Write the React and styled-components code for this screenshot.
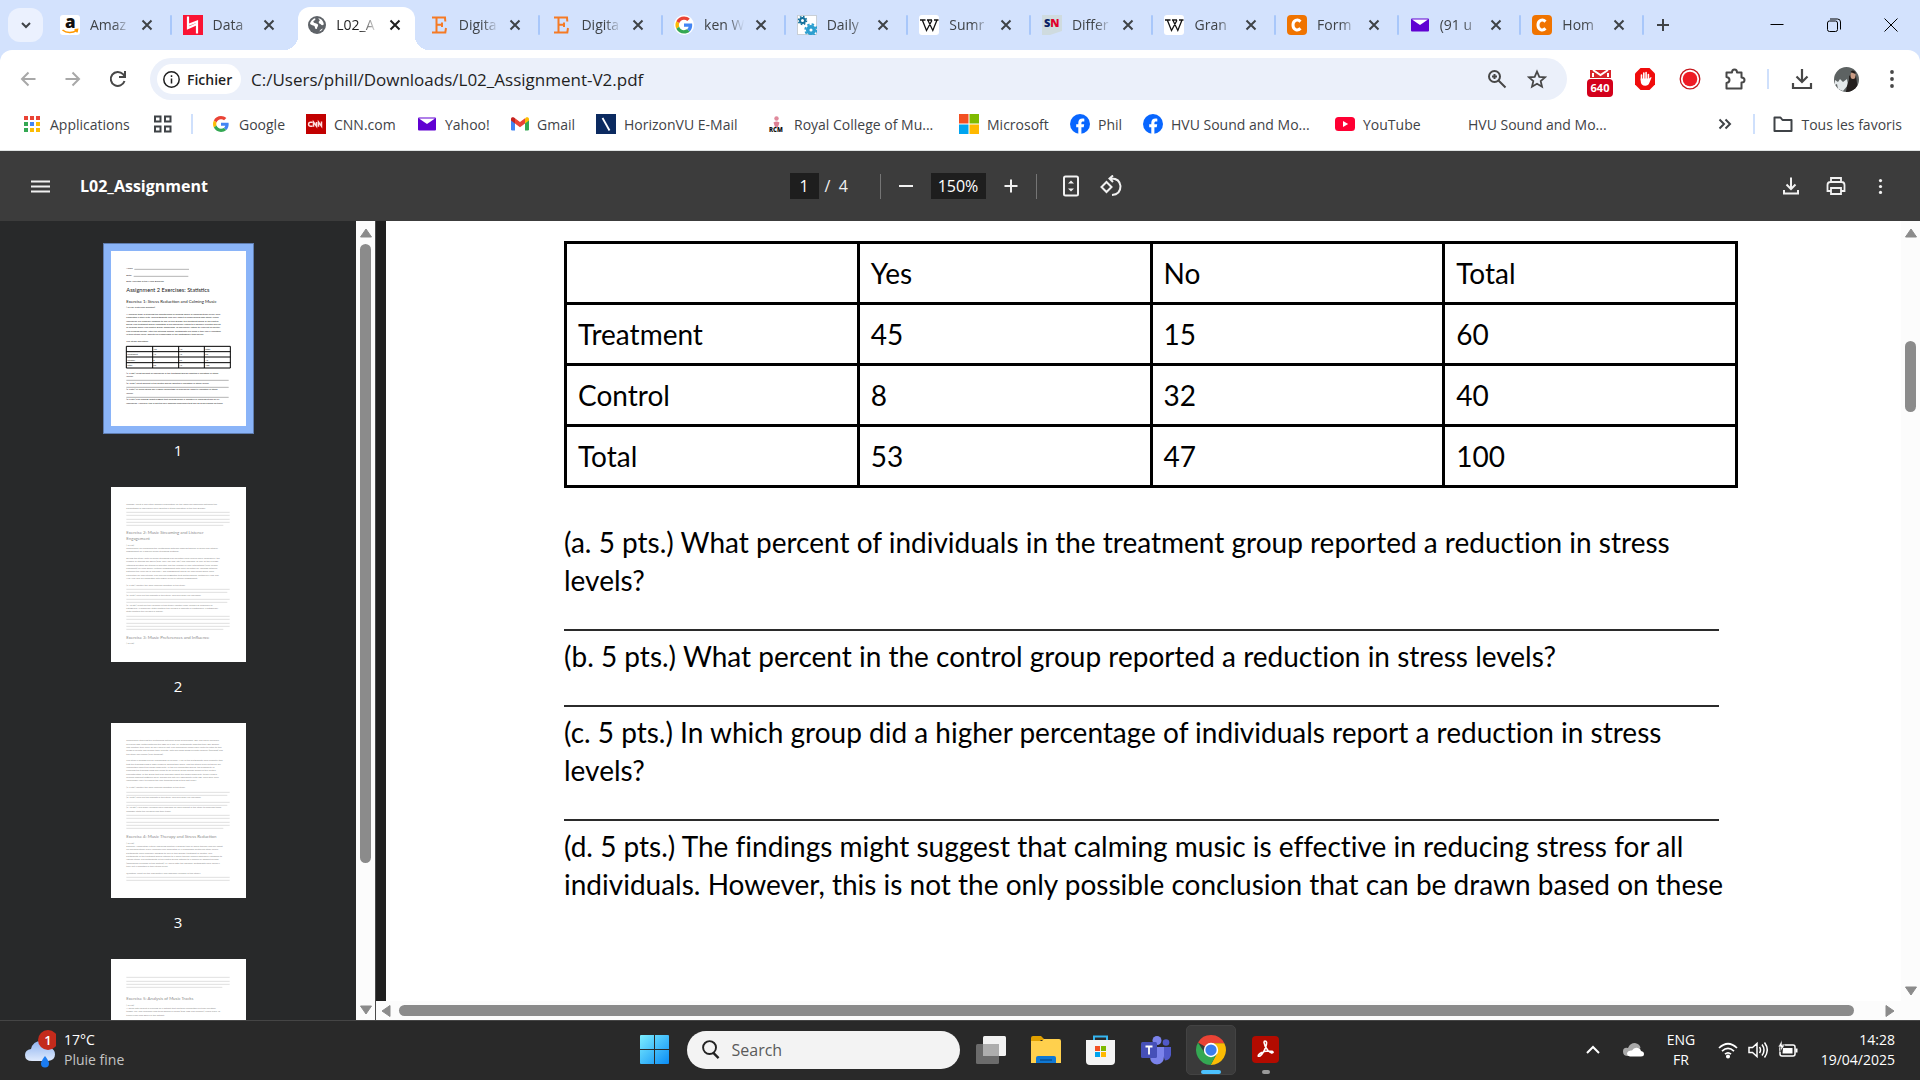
import React from "react";
import styled, { createGlobalStyle, css } from "styled-components";

const UI = `"Open Sans", "Noto Sans", sans-serif`;

const GlobalStyle = createGlobalStyle`
  *, *::before, *::after { box-sizing: border-box; }
  body { margin: 0; font-family: ${UI}; background: #fff; }
  button, input { font: inherit; color: inherit; border: 0; padding: 0; margin: 0; background: none; }
  button { cursor: pointer; }
  svg { display: block; flex: none; }
`;

const Screen = styled.div`
  height: 100vh;
  display: flex;
  flex-direction: column;
  overflow: hidden;
`;

/* ---------- tab strip ---------- */

const TabStrip = styled.header`
  height: 50px;
  flex: none;
  display: flex;
  align-items: center;
  background: #d3e2fd;
  color: #3f4347;
  font-size: 14px;
`;

const TabSearch = styled.button`
  width: 35px;
  height: 34px;
  margin: 0 5px 0 8px;
  border-radius: 12px;
  display: grid;
  place-items: center;
  background: #ebf1fe;
  flex: none;
`;

const Tabs = styled.div`
  flex: 0 1 1595px;
  min-width: 0;
  height: 50px;
  display: flex;
`;

const Tab = styled.div`
  flex: 1 1 0;
  min-width: 0;
  position: relative;
  display: flex;
  align-items: center;
  padding: 0 14px 0 12px;
  ${(p) =>
    p.$divided &&
    css`
      &::after {
        content: "";
        position: absolute;
        right: -1px;
        top: 15px;
        width: 2px;
        height: 20px;
        border-radius: 1px;
        background: #a8c7fa;
      }
    `}
  ${(p) =>
    p.$active &&
    css`
      margin: 7px 2px 0 5px;
      padding: 0 10px 7px;
      background: #fff;
      border-radius: 12px 12px 0 0;
      color: #1f1f1f;
      &::before,
      &::after {
        content: "";
        position: absolute;
        bottom: 0;
        width: 14px;
        height: 14px;
      }
      &::before {
        left: -14px;
        background: radial-gradient(circle at 0 0, transparent 14px, #fff 14px);
      }
      &::after {
        right: -14px;
        background: radial-gradient(circle at 100% 0, transparent 14px, #fff 14px);
      }
    `}
`;

const TabTitle = styled.button`
  flex: 1;
  min-width: 0;
  margin-left: 10px;
  overflow: hidden;
  white-space: nowrap;
  text-align: left;
  line-height: 20px;
  mask-image: linear-gradient(90deg, #000 50%, transparent 86%);
`;

const IconButton = styled.button`
  width: ${(p) => p.$w || 20}px;
  height: ${(p) => p.$h || 20}px;
  display: grid;
  place-items: center;
  flex: none;
`;

const NewTab = styled(IconButton)`
  margin-left: 10px;
`;

const WindowControls = styled.div`
  margin-left: auto;
  display: flex;
`;

/* ---------- address bar ---------- */

const Toolbar = styled.div`
  flex: none;
  height: 56px;
  display: flex;
  align-items: center;
  background: linear-gradient(#d3e2fd, #d3e2fd) top / 100% 12px no-repeat;
  color: #474747;
`;

const ToolbarFace = styled.div`
  flex: 1;
  height: 56px;
  display: flex;
  align-items: center;
  padding: 2px 6px 0 5px;
  background: #fff;
  border-radius: 12px 12px 0 0;
`;

const Omnibox = styled.div`
  flex: 1;
  height: 42px;
  margin: 0 10px;
  padding: 0 10px 0 7px;
  display: flex;
  align-items: center;
  border-radius: 21px;
  background: #ebf0fa;
`;

const FileChip = styled.button`
  width: 84px;
  height: 30px;
  border-radius: 15px;
  background: #fff;
  color: #1f1f1f;
  display: flex;
  align-items: center;
  gap: 7px;
  padding: 0 6px;
  font-size: 14px;
  font-weight: 600;
`;

const Address = styled.input`
  flex: 1;
  min-width: 0;
  margin-left: 10px;
  height: 30px;
  font-size: 17px;
  color: #1f1f1f;
  outline: 0;
`;

const Divider = styled.span`
  flex: none;
  width: 2px;
  height: 20px;
  background: #cfe0fc;
  margin: 0 ${(p) => p.$gap || 10}px;
`;

const Bookmarks = styled.nav`
  flex: none;
  height: 45px;
  display: flex;
  align-items: center;
  padding: 0 18px 8px 22px;
  border-bottom: 1px solid #dfe3e3;
  background: #fff;
  color: #3f4347;
  font-size: 14px;
`;

const Bookmark = styled.a`
  display: flex;
  align-items: center;
  gap: 8px;
  height: 28px;
  min-width: ${(p) => p.$w || 0}px;
  color: inherit;
  text-decoration: none;
  white-space: nowrap;
`;

const Spacer = styled.span`
  flex: 1;
`;

/* ---------- PDF toolbar ---------- */

const PdfBar = styled.div`
  flex: none;
  height: 70px;
  display: grid;
  grid-template-columns: 1fr auto 1fr;
  align-items: center;
  background: #3c3c3c;
  color: #f1f1f1;
  font-size: 16px;
`;

const PdfGroup = styled.div`
  display: flex;
  align-items: center;
  justify-content: ${(p) => (p.$end ? "flex-end" : "flex-start")};
  padding: ${(p) => (p.$end ? "0 17px 0 0" : p.$start ? "0 0 0 18px" : "0")};
`;

const PdfTitle = styled.h1`
  margin: 0 0 0 17px;
  font-size: 16px;
  font-weight: 700;
  color: #fff;
`;

const DarkInput = styled.input`
  width: ${(p) => p.$w}px;
  height: 26px;
  background: #1e1e1e;
  text-align: center;
  color: #fff;
  font-size: 16px;
`;

const PageCount = styled.span`
  margin-left: 6px;
  width: 55px;
  white-space: pre;
`;

const PdfRule = styled.span`
  width: 1px;
  height: 25px;
  margin-right: ${(p) => (p.$wide ? 14 : 0)}px;
  background: #757575;
`;

/* ---------- viewer ---------- */

const Viewer = styled.main`
  flex: 1;
  min-height: 0;
  display: flex;
  background: #28292a;
`;

const Sidebar = styled.aside`
  width: 356px;
  flex: none;
  overflow: hidden;
  display: flex;
  flex-direction: column;
  align-items: center;
  padding-top: 22px;
  background: #28292a;
`;

const Thumb = styled.button`
  display: flex;
  flex-direction: column;
  align-items: center;
  flex: none;
  height: 236px;
  color: #fff;
  font-size: 15px;
  line-height: 20px;
`;

const ThumbFrame = styled.span`
  padding: 7px;
  border: 1px solid ${(p) => (p.$on ? "#5f7db0" : "transparent")};
  background: ${(p) => (p.$on ? "#8ab4f8" : "transparent")};
  margin-bottom: 6px;
`;

const Sheet = styled.svg`
  width: 135px;
  height: 175px;
  background: #fff;
  font-family: Lato, sans-serif;
  text { fill: ${(p) => (p.$on ? "#222" : "#8c8c8c")}; }
  path { stroke: ${(p) => (p.$on ? "#444" : "#b0b0b0")}; }
`;

const VBar = styled.div`
  width: 19px;
  flex: none;
  display: flex;
  flex-direction: column;
  align-items: center;
  justify-content: space-between;
  padding: 7px 0 ${(p) => (p.$corner ? 24 : 5)}px;
  background: #fcfcfc;
  color: #8b8b8b;
`;

const VTrack = styled.div`
  flex: 1;
  display: flex;
  flex-direction: column;
  padding: 6px 0;
`;

const VThumb = styled.div`
  width: 11px;
  border-radius: 6px;
  background: #8b8b8b;
  flex: 0 0 ${(p) => p.$size};
  margin-top: ${(p) => p.$start || "0"};
`;

const HBar = styled.div`
  height: 19px;
  flex: none;
  display: flex;
  align-items: center;
  gap: 8px;
  padding: 0 6px 0 5px;
  background: #fcfcfc;
  color: #8b8b8b;
`;

const HThumb = styled.div`
  flex: 1;
  height: 11px;
  margin-right: 23px;
  border-radius: 6px;
  background: #8b8b8b;
`;

const DocPane = styled.section`
  flex: 1;
  min-width: 0;
  display: flex;
  flex-direction: column;
  border-left: 1px solid #4a4a4a;
`;

const DocScroll = styled.div`
  flex: 1;
  min-height: 0;
  overflow: hidden;
  padding-left: 10px;
  background: #1f1f1f;
`;

const Page = styled.article`
  height: 100%;
  padding: 20px 0 0 178px;
  background: #fff;
  color: #000;
  font-family: Lato, sans-serif;
  font-size: 28px;
  font-variant-ligatures: none;
  line-height: 38px;
`;

const DataTable = styled.table`
  width: 1174px;
  table-layout: fixed;
  border-collapse: collapse;
  margin-bottom: 35px;
  th, td {
    height: 61px;
    padding: 0 11px;
    border: 3px solid #000;
    font-weight: 400;
    text-align: left;
  }
`;

const Question = styled.p`
  margin: 0;
  white-space: nowrap;
`;

const AnswerRule = styled.div`
  width: 1155px;
  height: 32px;
  margin-bottom: 6px;
  border-bottom: 2px solid #2b2b2b;
`;

/* ---------- taskbar ---------- */

const Taskbar = styled.footer`
  flex: none;
  height: 60px;
  display: grid;
  grid-template-columns: 1fr auto 1fr;
  align-items: center;
  padding-bottom: 2px;
  background: #292929;
  border-top: 1px solid #454545;
  color: #fff;
  font-size: 14px;
  line-height: 20px;
`;

const Weather = styled.button`
  display: flex;
  align-items: center;
  gap: 8px;
  margin-left: 24px;
  text-align: left;
  white-space: nowrap;
  small { display: block; font-size: 14px; color: #c4c4c4; }
`;

const Apps = styled.div`
  display: flex;
  align-items: center;
  gap: 5px;
`;

const AppButton = styled.button`
  width: 50px;
  height: 50px;
  display: grid;
  place-items: center;
  position: relative;
  border-radius: 5px;
  background: ${(p) => (p.$active ? "#3a3a3a" : "transparent")};
  border: 1px solid ${(p) => (p.$active ? "#434343" : "transparent")};
  ${(p) =>
    p.$mark &&
    css`
      &::after {
        content: "";
        position: absolute;
        bottom: 0;
        left: calc(50% - ${p.$mark / 2}px);
        width: ${p.$mark}px;
        height: 4px;
        border-radius: 2px;
        background: ${p.$active ? "#4cc2ff" : "#9a9a9a"};
      }
    `}
`;

const SearchBox = styled.label`
  width: 273px;
  height: 38px;
  margin: 0 1px 0 2px;
  padding: 0 14px;
  border-radius: 19px;
  display: flex;
  align-items: center;
  gap: 12px;
  background: #f3f3f3;
  input {
    flex: 1;
    min-width: 0;
    font-size: 16px;
    color: #5a5a5a;
    outline: 0;
    &::placeholder { color: #5a5a5a; opacity: 1; }
  }
`;

const Tray = styled.div`
  display: flex;
  align-items: center;
  justify-content: flex-end;
  padding-right: 25px;
  gap: 10px;
`;

const TrayText = styled.button`
  text-align: ${(p) => p.$align};
  width: ${(p) => p.$w}px;
  font-size: 14px;
  line-height: 20px;
  white-space: pre-line;
`;

/* ---------- icons ---------- */

const Line = ({ s = 20, v = "0 0 20 20", w = 2, children, ...r }) => (
  <svg width={s} height={s} viewBox={v} fill="none" stroke="currentColor" strokeWidth={w} {...r}>
    {children}
  </svg>
);

const CloseX = () => (
  <Line s={12} v="0 0 12 12"><path d="M1.500 1.500l9 9M10.500 1.500l-9 9" /></Line>
);

const Amazon = () => (
  <svg width="20" height="20" viewBox="0 0 20 20">
    <rect width="20" height="20" rx="3" fill="#fff" />
    <text x="5" y="13" fontFamily="Open Sans, sans-serif" fontWeight="800" fontSize="17" fill="#111">a</text>
    <path d="M2.500 15c4 3.300 10 3.300 14 .6M14.500 14.800l3-.3-.6 2.800" fill="none" stroke="#f90" strokeWidth="1.600" />
  </svg>
);
const Berklee = () => (
  <svg width="20" height="20" viewBox="0 0 20 20">
    <rect width="20" height="20" fill="#fa1434" />
    <path d="M5 1.500v11.500l9-4M5 10l9-3.500v12M14 9v9" fill="none" stroke="#fff" strokeWidth="2.200" />
  </svg>
);
const Globe = () => (
  <svg width="18" height="18" viewBox="0 0 18 18">
    <circle cx="9" cy="9" r="9" fill="#5f6368" />
    <path d="M7 2.200c1 .8.300 2-.8 2.400S5 6.500 6.500 7s3.500.6 3.600 2-1 2-1 3-1.200 1.500-1.800.4-.3-2.200-1.300-2.600S2.500 8.500 2.200 8 3 3.500 7 2.200zM10.500 2.300c2.800.4 5 3 5.300 6-.8 1-2.300 1.200-2.800.2s-2-.6-2.300-2 1.300-1.400 1-2.300-1.500-.9-1.200-1.900zM11.500 15.600c.3-1.500 1.500-2.500 3.400-3-.8 1.500-2 2.600-3.400 3z" fill="#fff" />
  </svg>
);
const Etsy = () => (
  <svg width="20" height="20" viewBox="0 0 20 20">
    <path d="M3 2.500h13l.3 4M3 17.500h13.300l.7-4.500M7.500 2.500v15M7.500 9.800h5.500M13 7.500v4.600" fill="none" stroke="#f57a24" strokeWidth="2" />
  </svg>
);
const GoogleG = ({ disc }) => (
  <svg width="20" height="20" viewBox={disc ? "-4 -4 56 56" : "-6 -6 60 60"}>
    {disc && <circle cx="24" cy="24" r="28" fill="#fff" />}
    <path fill="#EA4335" d="M24 9.500c3.540 0 6.710 1.220 9.210 3.600l6.850-6.850C35.900 2.380 30.470 0 24 0 14.620 0 6.510 5.380 2.560 13.220l7.980 6.190C12.430 13.720 17.740 9.500 24 9.500z" />
    <path fill="#4285F4" d="M46.980 24.550c0-1.570-.15-3.090-.38-4.550H24v9.020h12.940c-.58 2.960-2.260 5.480-4.780 7.180l7.730 6c4.510-4.180 7.090-10.360 7.090-17.650z" />
    <path fill="#FBBC05" d="M10.530 28.590c-.48-1.450-.76-2.990-.76-4.590s.27-3.140.76-4.590l-7.980-6.190C.92 16.460 0 20.120 0 24s.92 7.540 2.560 10.780l7.970-6.190z" />
    <path fill="#34A853" d="M24 48c6.480 0 11.930-2.130 15.890-5.810l-7.730-6c-2.150 1.450-4.920 2.300-8.160 2.300-6.260 0-11.570-4.220-13.470-9.910l-7.980 6.190C6.510 42.620 14.620 48 24 48z" />
  </svg>
);
const Gears = () => (
  <svg width="20" height="20" viewBox="0 0 20 20">
    <rect x=".5" y=".5" width="19" height="19" fill="#fff" stroke="#c9cfd6" />
    <g fill="none">
      <circle cx="5.500" cy="5.500" r="2.500" stroke="#14719c" strokeWidth="2" />
      <circle cx="5.500" cy="5.500" r="4" stroke="#14719c" strokeWidth="1.500" strokeDasharray="1.600 1.540" />
      <circle cx="14" cy="15" r="3.300" stroke="#2d9fd0" strokeWidth="3.500" />
      <circle cx="14" cy="15" r="5.700" stroke="#2d9fd0" strokeWidth="2" strokeDasharray="2.400 2.070" />
    </g>
  </svg>
);
const Wiki = () => (
  <svg width="20" height="20" viewBox="0 0 20 20">
    <rect width="20" height="20" rx="3" fill="#fff" />
    <path d="M1 5h5.500M8 5h5M15 5h4.500M3.300 5l4.200 10.500L13 5.200M8.800 5l5 10.500L18 5" fill="none" stroke="#111" strokeWidth="1.300" />
  </svg>
);
const SN = () => (
  <svg width="20" height="20" viewBox="0 0 20 20">
    <path d="M0 0h20v16L8 20H0z" fill="#cfdbdf" />
    <text x="2" y="12" fontFamily="Open Sans, sans-serif" fontWeight="800" fontSize="11" fill="#0a1f66">
      S<tspan fill="#e0002a">N</tspan>
    </text>
  </svg>
);
const OrangeC = () => (
  <svg width="20" height="20" viewBox="0 0 20 20">
    <rect width="20" height="20" rx="4" fill="#f07400" />
    <path d="M13.500 6.600c-3-3-7.500-1.200-7.500 3.400s4.500 6.400 7.500 3.400" fill="none" stroke="#fff" strokeWidth="3" />
  </svg>
);
const YahooMail = () => (
  <svg width="20" height="20" viewBox="0 0 20 20">
    <rect x="1" y="3.500" width="18" height="13" rx="1" fill="#6001d2" />
    <path d="M2 4.500h16L10 10z" fill="#fff" />
  </svg>
);
const AppsGrid = () => (
  <svg width="20" height="20" viewBox="0 0 20 20">
    {["#ea4335", "#ea4335", "#ea4335", "#34a853", "#4285f4", "#fbbc04", "#34a853", "#fbbc04", "#fbbc04"].map((c, i) => (
      <rect key={i} x={2 + (i % 3) * 6} y={2 + Math.floor(i / 3) * 6} width="4" height="4" fill={c} />
    ))}
  </svg>
);
const CNN = () => (
  <svg width="20" height="20" viewBox="0 0 20 20">
    <rect width="20" height="20" fill="#c20000" />
    <path d="M6.500 8.200H4.600q-2 0-2 2t2 2h1.900M7.500 12.700V8l3 4.200V8M12.500 12.700V8l3 4.200V7.500" fill="none" stroke="#ffdede" strokeWidth="1.500" />
  </svg>
);
const Gmail = () => (
  <svg width="18" height="20" viewBox="0 0 18 20">
    <path d="M0 5.500v9.700q0 1.300 1.300 1.300H4V9z" fill="#4285f4" />
    <path d="M18 5.500v9.700q0 1.300-1.300 1.300H14V9z" fill="#34a853" />
    <path d="M14 4.500V9.500l4-3V5c0-2-2.200-2-3-1.400z" fill="#fbbc04" />
    <path d="M4 9.500V4.300L9 8l5-3.700v5.200l-5 3.700z" fill="#ea4335" />
    <path d="M0 5v1.600l4 3V4.300l-1-.7C1.600 2.700 0 3.400 0 5z" fill="#c5221f" />
  </svg>
);
const Horizon = () => (
  <svg width="20" height="20" viewBox="0 0 20 20">
    <rect width="20" height="20" fill="#0b2a60" />
    <path d="M6.500 4l7 12.500" stroke="#fff" strokeWidth="1.800" />
  </svg>
);
const Rcm = () => (
  <svg width="20" height="20" viewBox="0 0 20 20">
    <circle cx="10.500" cy="4.500" r="2.200" fill="#e08a9c" />
    <path d="M7.500 8.500q3-2 6 0L12 13H9z" fill="#dc7f92" />
    <text x="3" y="18" fontFamily="Open Sans, sans-serif" fontWeight="800" fontSize="6" fill="#111">RCM</text>
  </svg>
);
const Microsoft = () => (
  <svg width="20" height="20" viewBox="0 0 20 20">
    <path fill="#f25022" d="M0 0h9.500v9.500H0z" /><path fill="#7fba00" d="M10.500 0H20v9.500h-9.500z" />
    <path fill="#00a4ef" d="M0 10.500h9.500V20H0z" /><path fill="#ffb900" d="M10.500 10.500H20V20h-9.500z" />
  </svg>
);
const Facebook = () => (
  <svg width="20" height="20" viewBox="0 0 20 20">
    <circle cx="10" cy="10" r="10" fill="#0866ff" />
    <path d="M8.300 20v-6.700H6.200v-3h2.100V9c0-3 1.500-4.400 4.300-4.400.6 0 1.300.1 1.700.2v2.700h-1.200c-1.300 0-1.700.6-1.700 1.700v1.100h2.800l-.5 3h-2.300V20z" fill="#fff" />
  </svg>
);
const YouTube = () => (
  <svg width="20" height="20" viewBox="0 0 20 20">
    <rect y="3" width="20" height="14" rx="3.500" fill="#ff0033" /><path d="M8 7l5.200 3L8 13z" fill="#fff" />
  </svg>
);
const Dots = ({ s = 20 }) => (
  <svg width={s} height={s} viewBox="0 0 20 20" fill="currentColor">
    <circle cx="10" cy="3" r="1.900" /><circle cx="10" cy="10" r="1.900" /><circle cx="10" cy="17" r="1.900" />
  </svg>
);

const Triangle = ({ dir }) => {
  const d = {
    up: "M7 1L12.500 9H1.500z", down: "M1.500 1h11L7 9z",
    left: "M1 7L9 1.500v11z", right: "M9 7L1 1.500v11z",
  }[dir];
  const vert = dir === "up" || dir === "down";
  return (
    <svg width={vert ? 14 : 10} height={vert ? 10 : 14} viewBox={vert ? "0 0 14 10" : "0 0 10 14"}>
      <path d={d} fill="currentColor" stroke="currentColor" strokeLinejoin="round" />
    </svg>
  );
};

/* ---------- data ---------- */

const tabs = [
  ["Amaz", Amazon, true], ["Data", Berklee, false], ["L02_A", Globe, false, true],
  ["Digita", Etsy, true], ["Digita", Etsy, true], ["ken W", () => <GoogleG disc />, true],
  ["Daily", Gears, true], ["Sumr", Wiki, true], ["Differ", SN, true], ["Gran", Wiki, true],
  ["Form", OrangeC, true], ["(91 u", YahooMail, true], ["Hom", OrangeC, true],
];

const bookmarks = [
  ["Google", GoogleG, 95], ["CNN.com", CNN, 111], ["Yahoo!", YahooMail, 94],
  ["Gmail", Gmail, 85], ["HorizonVU E-Mail", Horizon, 170], ["Royal College of Mu...", Rcm, 193],
  ["Microsoft", Microsoft, 111], ["Phil", Facebook, 73], ["HVU Sound and Mo...", Facebook, 192],
  ["YouTube", YouTube, 133], ["HVU Sound and Mo...", null, 143],
];

const rows = [["Treatment", 45, 15, 60], ["Control", 8, 32, 40], ["Total", 53, 47, 100]];

const R = (y, end = 356, x = 46) => ({ y, end, x });
const H = (y, t, s = 14) => ({ y, t, s });
const block = (ys, lines) => lines.map((t, i) => H(ys[i], t, 7));

const sheets = [
  [
    H(55, "Name:", 7), R(55, 234, 70), H(76, "Date:", 7), R(76, 232, 68),
    H(93, "Data Analytics in the Music Business", 7),
    H(123, "Assignment 2 Exercises: Statistics", 17),
    H(156, "Exercise 1: Stress Reduction and Calming Music", 13), H(171, "(40 Pts: 5 pts each question)", 7),
    ...block([192, 202, 212, 222, 231, 243, 252], [
      "A research team is studying the effectiveness of calming music in reducing stress levels. They",
      "conducted a study with 100 participants who self-report as experiencing high stress. These",
      "individuals are randomly assigned to one of two groups: the treatment group or the control",
      "group. The treatment group, consisting of 60 individuals, listens to a specially curated playlist",
      "of calming music. The control group, comprising 40 individuals, listens to a playlist of neutral,",
      "non-calming sounds. After the listening session, participants are asked if they feel a reduction",
      "in their stress levels. Results are summarized in the contingency table below.",
    ]),
    H(273, "2x2 Stress Reduction:", 7),
    ...block([369, 378], ["(a. 5 pts.) What percent of individuals in the treatment group reported a reduction in stress", "levels?"]),
    R(388, 353), H(399, "(b. 5 pts.) What percent in the control group reported a reduction in stress levels?", 7), R(409, 353),
    ...block([417, 429], ["(c. 5 pts.) In which group did a higher percentage of individuals report a reduction in stress", "levels?"]),
    R(439, 353),
    ...block([447, 459], ["(d. 5 pts.) The findings might suggest that calming music is effective in reducing stress for all", "individuals. However, this is not the only possible conclusion that can be drawn based on these"]),
  ],
  [
    ...block([54, 65], ["findings. What is one other possible explanation for the observed difference between the", "percentages of individuals who reported a stress reduction in the two groups?"]),
    R(76), R(85), R(97), R(106), R(115, 337),
    H(141, "Exercise 2: Music Streaming and Listener", 13), H(159, "Engagement", 13), H(176, "(40 Pts)", 7),
    ...block([186, 195], ["Researchers are examining the relationship between different genres of music and listener", "engagement on a popular music streaming platform."]),
    ...block([216, 225, 237, 246, 255, 267, 276], [
      "During the study, data on music streaming was collected from various users. Specifically, the",
      "number of streams per genre (pop, rock, hip-hop, etc.) was recorded, as well as the average",
      "listening duration per stream in minutes, and the number of user interactions (likes, shares,",
      "comments) for each genre. Listener engagement data were collected on 100,000 listeners",
      "between the years 2015 and 2021, and engagement scores for each music genre were",
      "calculated for each stream. The analysis suggested that certain genres, particularly Pop and",
      "Hip-Hop, may be associated with higher levels of listener engagement.",
    ]),
    H(297, "(a. 5 pts.) Identify the main research question of the study.", 7), R(307), R(316, 349),
    H(327, "(b. 5 pts.) Who are the subjects in this study, and how many are included?", 7), R(337), R(346, 349),
    ...block([357, 366, 375], ["(c. 10 pts.) What are the variables in this study? Identify each variable as numerical or", "categorical. If numerical, state whether the variable is discrete or continuous. If categorical,", "state whether the variable is ordinal."]),
    R(388), R(397), R(409), R(418), R(427, 337),
    H(457, "Exercise 3: Music Preferences and Influence", 13), H(470, "(40 Pts)", 7),
  ],
  [
    ...block([54, 66, 75, 84, 96], [
      "Researchers studying the relationship between music preferences, age, and social influence",
      "surveyed 500 youths between the ages of 9 and 19. Participants reported their age, gender,",
      "and whether they were an only child or not. The researchers asked each youth to listen to two",
      "songs in private and choose their favorite, with one song being currently popular (trending) and",
      "the other less known (non-trending).",
    ]),
    ...block([114, 125, 135, 144, 155, 165, 174], [
      "The study's findings can be summarized as follows: \"Half of the participants were explicitly told",
      "that the trending song is highly popular among their peers, and the others were not given any",
      "information about the song's popularity. In the no-information group, the probability of",
      "choosing the trending song was found to be uniform across groups based on the youth's",
      "characteristics. In the group that was informed about the song's popularity, those living in",
      "showed different patterns: boys' choices did not vary significantly with age, while girls were",
      "increasingly likely to choose the non-trending song as they got older.\"",
    ]),
    H(195, "(a. 5 pts.) Identify the main research question of the study.", 7), R(208), R(217, 349),
    H(225, "(b. 5 pts.) Who are the subjects in this study, and how many are included?", 7), R(238), R(247, 349),
    ...block([255, 266], ["(c. 10 pts.) How many variables were recorded for each subject in the study to conclude these", "findings? State the variables and their types."]),
    R(277), R(286), R(298), R(307), R(316, 337),
    H(345, "Exercise 4: Music Therapy and Stress Reduction", 13), H(362, "(40 Pts)", 7),
    ...block([372, 381, 392, 402, 411, 423, 432], [
      "Exercise: I conducted a study exploring whether a specific type of music therapy had any effect",
      "on reducing stress levels. Research was conducted in a randomized controlled study where",
      "participants were randomly assigned to one of two groups: treatment or control. The",
      "participants in the treatment group listened to a music therapy session specifically designed to",
      "reduce stress. The participants in the control group listened to a session of ambient sounds",
      "(considered a placebo in this context). 24 hours after the sessions, participants were asked if",
      "they felt a reduction in their stress levels.",
    ]),
    H(453, "Question: What are the explanatory and response variables in this study?", 7), R(463), R(472),
  ],
  [
    R(55), R(67), R(76), R(85, 334),
    H(123, "Exercise 5: Analysis of Music Tracks", 13), H(140, "(40 Pts)", 7),
    ...block([150, 160, 170], ["A music data analyst is working on a dataset that contains information on track duration,", "tempo, key, and loudness from three genres of music (pop, jazz, and classical). There were 40", "tracks from each genre in the dataset."]),
  ],
];

function Preview({ items, on }) {
  return (
    <Sheet viewBox="0 0 405 525" $on={on} aria-hidden="true">
      {items.map((it, i) =>
        it.t ? (
          <text key={i} x="46" y={it.y} fontSize={it.s}>{it.t}</text>
        ) : (
          <path key={i} d={`M${it.x} ${it.y}H${it.end}`} strokeWidth="1.200" />
        )
      )}
      {on && (
        <>
          <path d="M46 286H358V351H46zM46 302H358M46 318H358M46 335H358M125 286V351M203 286V351M280 286V351" fill="none" strokeWidth="3" style={{ stroke: "#000" }} />
          {[["", "Yes", "No", "Total"], ...rows].map((r, y) =>
            r.map((c, x) => <text key={`${x}-${y}`} x={49 + x * 78} y={297 + y * 16} fontSize="7">{c}</text>)
          )}
        </>
      )}
    </Sheet>
  );
}

const RainCloud = () => (
  <svg width="32" height="40" viewBox="0 0 32 40">
    <defs>
      <linearGradient id="cloud" x1="0" y1="0" x2="0" y2="1"><stop offset="0" stopColor="#8fb4f0" /><stop offset="1" stopColor="#dfeafd" /></linearGradient>
    </defs>
    <path d="M8 31q-7 0-7-6 0-5 6-6 2-8 10-8 7 0 9 7 5 1 5 6.500T24 31z" fill="url(#cloud)" />
    <path d="M21 26q-4 5-4 7.500a4 4 0 0 0 8 0Q25 31 21 26z" fill="#1a7cf2" />
    <circle cx="24" cy="10" r="10" fill="#c42b1c" />
    <text x="24" y="15" textAnchor="middle" fontSize="13" fontWeight="600" fill="#fff">1</text>
  </svg>
);

const Teams = () => (
  <svg width="30" height="30" viewBox="0 0 30 30">
    <circle cx="25" cy="7.500" r="3.300" fill="#5059c9" /><path d="M19 12h11v8q-1 5-6 5.500z" fill="#5059c9" />
    <circle cx="16" cy="5.500" r="4.500" fill="#7b83eb" /><path d="M9 12h14v9q0 8-7 8.500-7-.5-7-8.500z" fill="#7b83eb" />
    <rect y="7" width="16" height="16" rx="1.500" fill="#4650b8" />
    <path d="M4.500 11.500h7M8 11.500v8" stroke="#fff" strokeWidth="1.800" />
  </svg>
);

const Chrome = () => (
  <svg width="30" height="30" viewBox="0 0 48 48">
    <path d="M24 24L3.200 12A24 24 0 0 1 45.300 13H24z" fill="#ea4335" />
    <path d="M33.500 29.500L23.500 48H24A24 24 0 0 0 45.300 13H24z" fill="#fbbc04" />
    <path d="M3.200 12L14.500 29.500 24 35 33.500 29.500 23.500 48A24 24 0 0 1 3.200 12z" fill="#34a853" />
    <circle cx="24" cy="24" r="11.500" fill="#fff" /><circle cx="24" cy="24" r="9" fill="#3b7ded" />
  </svg>
);

/* ---------- app ---------- */

export default function App() {
  return (
    <Screen>
      <GlobalStyle />
      <TabStrip>
        <TabSearch aria-label="Search tabs"><Line s={12} v="0 0 12 12"><path d="M2 4l4 4 4-4" /></Line></TabSearch>
        <Tabs>
          {tabs.map(([t, Icon, divided, active], i) => (
            <Tab key={i} $divided={divided} $active={active}>
              <Icon />
              <TabTitle>{t}</TabTitle>
              <IconButton aria-label={`Close ${t}`}><CloseX /></IconButton>
            </Tab>
          ))}
        </Tabs>
        <NewTab aria-label="New tab"><Line s={14} v="0 0 14 14"><path d="M7 1v12M1 7h12" /></Line></NewTab>
        <WindowControls>
          <IconButton $w={57} $h={50} aria-label="Minimize"><Line s={14} v="0 0 14 14" w={1}><path d="M.5 6.500h13" stroke="#000" /></Line></IconButton>
          <IconButton $w={57} $h={50} aria-label="Restore"><Line s={14} v="0 0 14 14" w={1} stroke="#000"><rect x=".5" y="3" width="10" height="10.500" rx="2" /><path d="M3 1h7.500q3 0 3 3v7.500" /></Line></IconButton>
          <IconButton $w={58} $h={50} aria-label="Close window"><Line s={14} v="0 0 14 14" w={1} stroke="#000"><path d="M.5.5l13 13M13.500.5l-13 13" /></Line></IconButton>
        </WindowControls>
      </TabStrip>

      <Toolbar>
        <ToolbarFace>
          <IconButton $w={45} $h={40} aria-label="Back"><Line s={16} v="0 0 16 16" stroke="#a8a8a8"><path d="M15.500 8H2M8.500 1.500L2 8l6.500 6.500" /></Line></IconButton>
          <IconButton $w={45} $h={40} aria-label="Forward"><Line s={16} v="0 0 16 16" stroke="#a8a8a8"><path d="M.5 8H14M7.500 1.500L14 8l-6.500 6.500" /></Line></IconButton>
          <IconButton $w={45} $h={40} aria-label="Reload"><Line s={18} v="0 0 18 18"><path d="M15.500 11A7 7 0 1 1 14 4.200L16 6.500M16 1v6h-6" /></Line></IconButton>
          <Omnibox>
            <FileChip>
              <Line s={17} v="0 0 17 17" w={1.500}><circle cx="8.500" cy="8.500" r="7.700" /><path d="M8.500 7.500v5M8.500 4.300v1.700" /></Line>
              Fichier
            </FileChip>
            <Address aria-label="Address" defaultValue="C:/Users/phill/Downloads/L02_Assignment-V2.pdf" />
            <IconButton $w={40} $h={40} aria-label="Zoom"><Line s={20}><circle cx="7.500" cy="7.500" r="5.500" /><path d="M11.500 11.500l7 7M7.500 5v5M5 7.500h5" /></Line></IconButton>
            <IconButton $w={40} $h={40} aria-label="Bookmark this tab"><Line s={20} w={1.800}><path d="M10 2.500l2.300 5.300 5.700.5-4.300 3.800 1.300 5.600-5-3-5 3 1.300-5.600L2 8.300l5.700-.5z" /></Line></IconButton>
          </Omnibox>
          <IconButton $w={45} $h={40} aria-label="Mail checker">
            <svg width="26" height="38" viewBox="0 0 26 38">
              <rect x="3" y="10" width="21" height="8" fill="#d8232a" /><path d="M6 10l7.500 5L21 10M6 17V13M21 17V13" stroke="#fff" strokeWidth="2" fill="none" />
              <rect y="19" width="26" height="18" rx="4" fill="#d3001b" />
              <text x="13" y="32" textAnchor="middle" fontSize="11" fontWeight="700" fill="#fff">640</text>
            </svg>
          </IconButton>
          <IconButton $w={45} $h={40} aria-label="Ad blocker">
            <svg width="22" height="22" viewBox="0 0 22 22">
              <path d="M6.500 0h9L21 5.500v11L15.500 22h-9L1 16.500v-11z" fill="#f00c0c" />
              <path d="M7.500 12V7M9.800 11V5M12.100 11V4.500M14.400 12V6.500" stroke="#fff" strokeWidth="1.600" strokeLinecap="round" />
              <path d="M6.700 10.500h8.500l1.800-1.500q.8 0 .3 1.200l-2 4.800q-1 2.800-4 2.800-4.600 0-4.600-5z" fill="#fff" />
            </svg>
          </IconButton>
          <IconButton $w={45} $h={40} aria-label="Recorder">
            <svg width="22" height="22" viewBox="0 0 22 22"><circle cx="11" cy="11" r="9.800" fill="#fff" stroke="#c4161c" strokeWidth="1.300" /><circle cx="11" cy="11" r="7.300" fill="#ee1c25" /></svg>
          </IconButton>
          <IconButton $w={45} $h={40} aria-label="Extensions"><Line s={22} v="0 0 22 22"><path d="M2.500 4.500h5.500q0-3 2.500-3t2.500 3h4.500v5q3 0 3 2.500t-3 2.500v6h-15v-5.500q3-.5 3-3t-3-3z" strokeLinejoin="round" /></Line></IconButton>
          <Divider />
          <IconButton $w={45} $h={40} aria-label="Downloads"><Line s={22} v="0 0 22 22" w={2.200}><path d="M11 1v13M5.500 8.500l5.500 5.500 5.500-5.500M2 15v5h18v-5" /></Line></IconButton>
          <IconButton $w={45} $h={40} aria-label="Profile">
            <svg width="25" height="25" viewBox="0 0 25 25">
              <defs><clipPath id="face"><circle cx="12.500" cy="12.500" r="12.500" /></clipPath></defs>
              <g clipPath="url(#face)">
                <rect width="25" height="25" fill="#5d6262" /><path d="M1 13l3 2 2-3 3 3 4-3 1 6-5 6-5-2-1-5-2 1z" fill="#e3e8ea" />
                <path d="M15 9q4-4 7 0l1 7 2 9H12q1-8 3-12z" fill="#24201f" /><ellipse cx="19" cy="8.500" rx="2.500" ry="3.500" fill="#c99c85" /><path d="M16.500 5q2-3 5 0v2z" fill="#211b19" />
              </g>
            </svg>
          </IconButton>
          <IconButton $w={45} $h={40} aria-label="Menu"><Dots /></IconButton>
        </ToolbarFace>
      </Toolbar>

      <Bookmarks aria-label="Bookmarks">
        <Bookmark href="#apps" $w={131}><AppsGrid />Applications</Bookmark>
        <IconButton aria-label="Tab groups"><Line s={18} v="0 0 18 18"><path d="M1 1.500h5.500v5H1zM11 1.500h5.500v5H11zM1 11.500h5.500v5H1zM11 11.500h5.500v5H11z" /></Line></IconButton>
        <Divider $gap={18} />
        {bookmarks.map(([t, Icon, w], i) => (
          <Bookmark href="#bookmark" key={i} $w={w}>{Icon && <Icon />}{t}</Bookmark>
        ))}
        <Spacer />
        <IconButton aria-label="More bookmarks"><Line s={14} v="0 0 14 14"><path d="M1.500 2.500L6 7l-4.500 4.500M7.500 2.500L12 7l-4.500 4.500" /></Line></IconButton>
        <Divider $gap={18} />
        <Bookmark href="#all"><Line s={20}><path d="M1.500 3.500h6l2 2.500h9v11h-17z" strokeLinejoin="round" /></Line>Tous les favoris</Bookmark>
      </Bookmarks>

      <PdfBar>
        <PdfGroup $start>
          <IconButton $w={45} $h={45} aria-label="Toggle sidebar"><Line s={19} v="0 0 19 14"><path d="M0 2h19M0 7h19M0 12h19" /></Line></IconButton>
          <PdfTitle>L02_Assignment</PdfTitle>
        </PdfGroup>
        <PdfGroup>
          <DarkInput $w={29} aria-label="Page number" defaultValue="1" />
          <PageCount>{"/  4"}</PageCount>
          <PdfRule />
          <IconButton $w={50} $h={40} aria-label="Zoom out"><Line s={14} v="0 0 14 14"><path d="M0 7h14" /></Line></IconButton>
          <DarkInput $w={55} aria-label="Zoom level" defaultValue="150%" />
          <IconButton $w={50} $h={40} aria-label="Zoom in"><Line s={14} v="0 0 14 14"><path d="M7 .5v13M.5 7h13" /></Line></IconButton>
          <PdfRule $wide />
          <IconButton $w={40} $h={40} aria-label="Fit to page">
            <Line s={22} v="0 0 22 22"><rect x="4" y="1.500" width="14" height="19" rx="1.500" /><path d="M8 8.500h6L11 5.500zM8 13.500h6L11 16.500z" fill="currentColor" stroke="none" /></Line>
          </IconButton>
          <IconButton $w={40} $h={40} aria-label="Rotate counterclockwise">
            <Line s={22} v="0 0 22 22"><path d="M6.500 7l5 5-5 5-5-5zM9.500 3.500q10-1 11 7.500 0 8.500-8.500 9M13 .5l-3.500 3 3.500 3.500" /></Line>
          </IconButton>
        </PdfGroup>
        <PdfGroup $end>
          <IconButton $w={45} $h={45} aria-label="Download"><Line s={18} v="0 0 18 18"><path d="M9 .5v11M4.500 7.500L9 12l4.500-4.500M2 13v3.500h14V13" /></Line></IconButton>
          <IconButton $w={45} $h={45} aria-label="Print"><Line s={20} w={1.800}><path d="M5 6V2h10v4M5 15H1.500V9q0-3 3-3h11q3 0 3 3v6H15M5 12h10v6H5z" /></Line></IconButton>
          <IconButton $w={45} $h={45} aria-label="More"><Dots s={17} /></IconButton>
        </PdfGroup>
      </PdfBar>

      <Viewer>
        <Sidebar>
          {sheets.map((items, i) => (
            <Thumb key={i} aria-label={`Page ${i + 1}`}>
              <ThumbFrame $on={i === 0}><Preview items={items} on={i === 0} /></ThumbFrame>
              {i + 1}
            </Thumb>
          ))}
        </Sidebar>
        <VBar><Triangle dir="up" /><VTrack><VThumb $size="82%" /></VTrack><Triangle dir="down" /></VBar>
        <DocPane>
          <DocScroll>
            <Page>
              <DataTable>
                <thead>
                  <tr><th aria-label="Group" /><th scope="col">Yes</th><th scope="col">No</th><th scope="col">Total</th></tr>
                </thead>
                <tbody>
                  {rows.map(([h, ...c]) => (
                    <tr key={h}><th scope="row">{h}</th>{c.map((v, i) => <td key={i}>{v}</td>)}</tr>
                  ))}
                </tbody>
              </DataTable>
              <Question>(a. 5 pts.) What percent of individuals in the treatment group reported a reduction in stress<br />levels?</Question>
              <AnswerRule />
              <Question>(b. 5 pts.) What percent in the control group reported a reduction in stress levels?</Question>
              <AnswerRule />
              <Question>(c. 5 pts.) In which group did a higher percentage of individuals report a reduction in stress<br />levels?</Question>
              <AnswerRule />
              <Question>(d. 5 pts.) The findings might suggest that calming music is effective in reducing stress for all<br />individuals. However, this is not the only possible conclusion that can be drawn based on these</Question>
            </Page>
          </DocScroll>
          <HBar><Triangle dir="left" /><HThumb /><Triangle dir="right" /></HBar>
        </DocPane>
        <VBar $corner><Triangle dir="up" /><VTrack><VThumb $size="71px" $start="97px" /></VTrack><Triangle dir="down" /></VBar>
      </Viewer>

      <Taskbar>
        <Weather><RainCloud /><span>17°C<small>Pluie fine</small></span></Weather>
        <Apps>
          <AppButton aria-label="Start">
            <svg width="29" height="29" viewBox="0 0 29 29">
              <defs><linearGradient id="win" x1="0" y1="0" x2="1" y2="1"><stop offset="0" stopColor="#7defff" /><stop offset="1" stopColor="#0a8cf5" /></linearGradient></defs>
              <path d="M0 1q0-1 1-1h13v14H0zM15 0h13q1 0 1 1v13H15zM0 15h14v14H1q-1 0-1-1zM15 15h14v13q0 1-1 1H15z" fill="url(#win)" />
            </svg>
          </AppButton>
          <SearchBox>
            <Line s={19} stroke="#222"><circle cx="9" cy="8" r="6.800" /><path d="M13 13.500l5.500 5.500" strokeWidth="2.500" /></Line>
            <input aria-label="Search" placeholder="Search" />
          </SearchBox>
          <AppButton aria-label="Task view">
            <svg width="30" height="28" viewBox="0 0 30 28"><rect x="7" width="23" height="20" rx="1.500" fill="#f2f2f2" /><rect y="8" width="23" height="20" rx="1.500" fill="#6b6b6b" /><path d="M7 8h16v12H7z" fill="#adadad" /></svg>
          </AppButton>
          <AppButton aria-label="File Explorer">
            <svg width="30" height="28" viewBox="0 0 30 28"><path d="M0 2q0-2 2-2h8l4 4h-4l-3 3H0z" fill="#e0a000" /><path d="M0 5h11l2-2h15q2 0 2 2v22H0z" fill="#ffd04d" /><path d="M5 27v-5q0-2 2-2h16q2 0 2 2v5z" fill="#0f78d4" /><path d="M9 24h12" stroke="#074f95" strokeWidth="1.500" /></svg>
          </AppButton>
          <AppButton aria-label="Store">
            <svg width="29" height="30" viewBox="0 0 29 30"><path d="M8 6V1.500h13V6" fill="none" stroke="#35b5f0" strokeWidth="2" /><path d="M0 5h29v21q0 4-4 4H4q-4 0-4-4z" fill="#f4f4f4" /><path d="M9 11h5v5H9z" fill="#f25022" /><path d="M15 11h5v5h-5z" fill="#7fba00" /><path d="M9 17h5v5H9z" fill="#00a4ef" /><path d="M15 17h5v5h-5z" fill="#ffb900" /></svg>
          </AppButton>
          <AppButton aria-label="Teams"><Teams /></AppButton>
          <AppButton aria-label="Chrome" $active $mark={20}><Chrome /></AppButton>
          <AppButton aria-label="Acrobat" $mark={8}>
            <svg width="27" height="27" viewBox="0 0 27 27"><rect width="27" height="27" rx="4" fill="#b30b00" /><path d="M13 5q2.500 0 1 5-2 7-6 10-2.500 1-1.500-1 2-3 9-4 6 0 5.500 1.500-1.500 1.500-5-2-3.500-4-4-8 0-1.500 1-1.500z" fill="none" stroke="#fff" strokeWidth="1.600" /></svg>
          </AppButton>
        </Apps>
        <Tray>
          <IconButton $w={38} aria-label="Hidden icons"><Line s={14} v="0 0 14 14"><path d="M1 10l6-6 6 6" /></Line></IconButton>
          <IconButton $w={22} $h={30} aria-label="OneDrive">
            <svg width="21" height="14" viewBox="0 0 21 14"><path d="M5 13Q0 13 0 8.500T5 5q2-5 7-5 5 1 5.500 5L10 12z" fill="#a9a9a9" /><path d="M7 13.500Q4 13 4 10q1-3 5-2.500 2-3.500 6-2.500 3 1 3 3 3 .5 3 3t-3 2.500z" fill="#fff" /></svg>
          </IconButton>
          <TrayText $w={54} $align="center">{"ENG\nFR"}</TrayText>
          <IconButton $h={30} aria-label="Network"><Line s={20} w={1.700}><path d="M1 8q9-8.500 18 0M4 11.200q6-5.500 12 0M7 14.200q3-2.700 6 0" /><circle cx="10" cy="16.500" r="1.200" fill="currentColor" /></Line></IconButton>
          <IconButton aria-label="Volume"><Line s={20} w={1.500}><path d="M1 7.500h3.500L9 3.500v13l-4.500-4H1zM11.500 7q2 3 0 6M14 4.500q4 5.500 0 11M16.500 2.500q5.500 7.500 0 15" /></Line></IconButton>
          <IconButton aria-label="Battery"><Line s={20} w={1.500}><rect x="2" y="5" width="15" height="11" rx="2" /><path d="M5 8h9.500v5.500H4.500z" fill="currentColor" stroke="none" /><path d="M18.500 8.500v4" strokeWidth="2" /><path d="M4 0L0 7h3l-1 5 5-7H4z" fill="currentColor" stroke="#292929" strokeWidth=".6" /></Line></IconButton>
          <TrayText $w={87} $align="right">{"14:28\n19/04/2025"}</TrayText>
        </Tray>
      </Taskbar>
    </Screen>
  );
}
